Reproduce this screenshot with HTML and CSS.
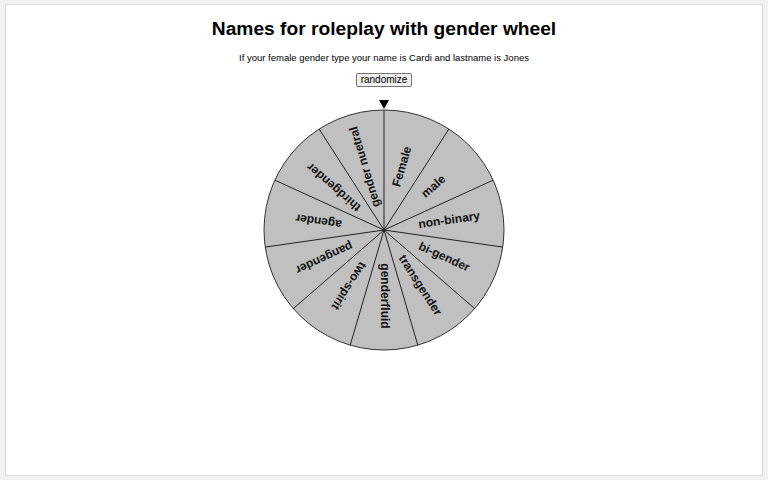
FILE: index.html
```html
<!DOCTYPE html>
<html>
<head>
<meta charset="utf-8">
<title>Names for roleplay with gender wheel</title>
<link rel="stylesheet" href="styles.css">
</head>
<body>
<div class="page">
  <h1 class="title">Names for roleplay with gender wheel</h1>
  <p class="intro">If your female gender type your name is Cardi and lastname is Jones</p>
  <button class="spin-btn" type="button">randomize</button>
  <div class="wheel-wrap">
    <svg class="wheel" width="242" height="252" viewBox="0 0 242 252" xmlns="http://www.w3.org/2000/svg">
      <g transform="translate(121,131)">
        <circle class="disc" cx="0" cy="0" r="120"/>
        <g class="spokes">
          <line x1="0" y1="0" x2="0" y2="-120"/>
          <line x1="0" y1="0" x2="64.87" y2="-100.95"/>
          <line x1="0" y1="0" x2="109.15" y2="-49.85"/>
          <line x1="0" y1="0" x2="118.78" y2="17.08"/>
          <line x1="0" y1="0" x2="90.69" y2="78.59"/>
          <line x1="0" y1="0" x2="33.80" y2="115.14"/>
          <line x1="0" y1="0" x2="-33.80" y2="115.14"/>
          <line x1="0" y1="0" x2="-90.69" y2="78.59"/>
          <line x1="0" y1="0" x2="-118.78" y2="17.08"/>
          <line x1="0" y1="0" x2="-109.15" y2="-49.85"/>
          <line x1="0" y1="0" x2="-64.87" y2="-100.95"/>
        </g>
        <g class="labels">
          <text x="66" y="0" transform="rotate(-73.64)">Female</text>
          <text x="66" y="0" transform="rotate(-40.91)">male</text>
          <text x="66" y="0" transform="rotate(-8.18)">non-binary</text>
          <text x="66" y="0" transform="rotate(24.55)">bi-gender</text>
          <text x="66" y="0" transform="rotate(57.27)">transgender</text>
          <text x="66" y="0" transform="rotate(90)">genderfluid</text>
          <text x="66" y="0" transform="rotate(122.73)">two-spirit</text>
          <text x="66" y="0" transform="rotate(155.45)">pangender</text>
          <text x="66" y="0" transform="rotate(188.18)">agender</text>
          <text x="66" y="0" transform="rotate(220.91)">thirdgender</text>
          <text x="66" y="0" transform="rotate(253.64)">gender nuetral</text>
        </g>
      </g>
      <polygon class="pointer" points="116,1 126,1 121,10"/>
    </svg>
  </div>
</div>
</body>
</html>
```
FILE: styles.css
```css
html, body {
  margin: 0;
  padding: 0;
}
body {
  background: #f2f2f2;
  padding: 4px 5px 4px 5px;
  font-family: "Liberation Sans", Arial, sans-serif;
}
.page {
  box-sizing: border-box;
  height: 472px;
  background: #ffffff;
  border: 1px solid #dcdcdc;
  text-align: center;
  color: #000;
}
.title {
  font-size: 19.2px;
  font-weight: bold;
  line-height: 24px;
  margin: 12px 0 0 0;
}
.intro {
  font-size: 9.5px;
  line-height: 12px;
  margin: 11px 0 0 0;
}
.spin-btn {
  display: inline-block;
  margin: 9px 0 0 0;
  font-family: "Liberation Sans", Arial, sans-serif;
  font-size: 10px;
  line-height: 12px;
  padding: 0 4px;
  background: #efefef;
  border: 1px solid #767676;
  border-radius: 2px;
  color: #000;
}
.wheel-wrap {
  margin-top: 12px;
  line-height: 0;
}
.wheel {
  display: inline-block;
}
.disc {
  fill: #c0c0c0;
  stroke: #333333;
  stroke-width: 1;
}
.spokes line {
  stroke: #222222;
  stroke-width: 1;
}
.labels text {
  font-family: "Liberation Sans", Arial, sans-serif;
  font-size: 12px;
  font-weight: bold;
  fill: #111111;
  text-anchor: middle;
  dominant-baseline: middle;
}
.pointer {
  fill: #000000;
}
```
